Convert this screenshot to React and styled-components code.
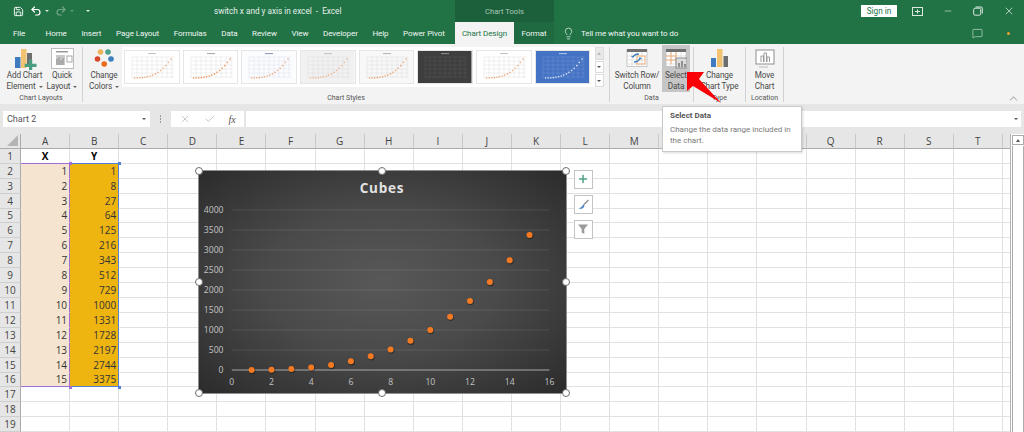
import React from "react";
import styled, { createGlobalStyle } from "styled-components";
import { Save, Undo2, Redo2, Lightbulb, MessageSquare, X, Check, ChevronUp, Plus, Minus } from "lucide-react";

const UI = `"Open Sans", "Noto Sans", "Liberation Sans", sans-serif`;
const SMALL = `Roboto, "Open Sans", "Liberation Sans", sans-serif`;

const Global = createGlobalStyle`
  html, body { margin: 0; padding: 0; width: 1024px; height: 432px; overflow: hidden; background: #fff; }
  * { box-sizing: border-box; }
  body { font-family: ${UI}; }
`;

const Window = styled.div`
  position: relative; width: 1024px; height: 432px; display: flex; flex-direction: column; overflow: hidden;
`;

/* ---------- title bar ---------- */
const TitleBar = styled.div`
  height: 22px; flex: none; background: #217346; color: #fff; display: flex; align-items: center; font: 8.2px ${SMALL};
`;
const Qat = styled.div`
  width: 214px; height: 100%; padding-left: 13px; display: flex; align-items: center; flex: none;
`;
const QatButton = styled.span`
  display: inline-flex; align-items: center; width: ${p => p.$w}px; opacity: ${p => (p.$dim ? 0.35 : 1)};
`;
const SmallCaret = styled.i`
  display: inline-block; width: 0; height: 0; margin-left: ${p => p.$gap ?? 3}px; vertical-align: middle;
  border-left: 2px solid transparent; border-right: 2px solid transparent;
  border-top: 2px solid ${p => p.$c || "#666"};
`;
const DocTitle = styled.div`
  width: 241px; flex: none; white-space: pre; color: #e6f0ea;
`;
const ContextTab = styled.div`
  width: 99px; height: 100%; flex: none; background: #1c5f3b; color: #a9c7b6; font: 7.6px ${SMALL};
  display: flex; align-items: center; justify-content: center;
`;
const Spring = styled.div` flex: 1; `;
const SignIn = styled.div`
  width: 36px; height: 12px; background: #fff; color: #217346; font: 8.2px/12px ${SMALL}; text-align: center; flex: none;
`;
const WinButtons = styled.div`
  display: flex; width: 127px; padding-left: 5px; flex: none; align-items: center;
`;
const WinButton = styled.div`
  width: 30.5px; height: 22px; display: flex; align-items: center; justify-content: center; color: #dbe9e1;
`;

/* ---------- tabs ---------- */
const TabRow = styled.div`
  height: 22px; flex: none; background: #217346; display: flex; align-items: stretch; color: #eef5f1; font: 8.05px ${SMALL}; letter-spacing: -0.1px;
`;
const TabList = styled.div`
  width: 455px; flex: none; display: flex; align-items: stretch;
`;
const Tab = styled.div`
  display: flex; align-items: center; white-space: nowrap; padding: 0 ${p => p.$pad ?? 7.3}px;
  ${p => p.$w ? `width:${p.$w}px; justify-content:center; padding:0;` : ""}
  ${p => p.$active ? "background:#f3f3f3; color:#217346;" : ""}
  ${p => p.$context ? "background:#1f6a41;" : ""}
`;
const TellMe = styled.div`
  display: flex; align-items: center; gap: 6px; margin-left: 8px; color: #eef5f1;
`;
const TabEnd = styled.div`
  margin-left: auto; display: flex; align-items: center; gap: 24px; padding-right: 14px;
`;
const Dot = styled.span`
  width: 3px; height: 3px; border-radius: 50%; background: #f0a030;
`;

/* ---------- ribbon ---------- */
const Ribbon = styled.div`
  height: 60px; flex: none; background: #f3f3f3; display: flex; position: relative; color: #444; font: 8.2px ${SMALL}; letter-spacing: -0.1px;
`;
const Group = styled.div`
  width: ${p => p.$w}px; flex: none; display: flex; flex-direction: column; height: 100%;
`;
const GroupBody = styled.div`
  height: 49px; padding: 1px 0 0 ${p => p.$pl ?? 0}px; display: flex; align-items: flex-start; flex: none;
`;
const GroupLabel = styled.div`
  text-align: center; font-size: 7px; line-height: 11px; color: #555; white-space: nowrap; letter-spacing: 0;
`;
const Divider = styled.div`
  width: 1px; flex: none; margin: 3px 0 2.5px; background: #d2d2d2;
`;
const RButton = styled.div`
  width: ${p => p.$w}px; height: 47px; flex: none; display: flex; flex-direction: column; align-items: center;
  padding-top: 2px; background: ${p => (p.$hot ? "#c6c6c6" : "transparent")};
`;
const RIcon = styled.svg`
  display: block; width: ${p => p.width}px; height: 23px; flex: none;
`;
const RText = styled.div`
  text-align: center; line-height: 11px; white-space: nowrap; color: #4a4a4a;
`;
const Gallery = styled.div`
  width: 480px; height: 40px; margin-top: 2px; background: #fff; display: flex; align-items: center; padding-left: 3px; gap: 5.2px; flex: none;
`;
const Thumb = styled.svg`
  width: 53.5px; height: 32px; flex: none; display: block; outline: 1px solid #e6e6e6;
`;
const GalleryScroll = styled.div`
  margin-left: auto; width: 9px; height: 40px; display: flex; flex-direction: column; gap: 1px; flex: none;
`;
const GalleryBtn = styled.div`
  flex: 1; background: ${p => (p.$off ? "#e9e9e9" : "#fff")}; border: 1px solid #dcdcdc; display: flex; align-items: center; justify-content: center; flex-direction: column; gap: 1px;
`;
const Collapse = styled.div`
  position: absolute; right: 4px; bottom: -1px; color: #666; display: flex;
`;

/* ---------- formula bar ---------- */
const FormulaRow = styled.div`
  height: 30px; flex: none; background: #e6e6e6; display: flex; align-items: center; padding: 0 3px; color: #555; font: 9px ${SMALL};
`;
const NameBox = styled.div`
  width: 147px; height: 16px; background: #fff; display: flex; align-items: center; justify-content: space-between; padding: 0 4px; flex: none;
`;
const Grip = styled.div`
  width: 21px; flex: none; display: flex; flex-direction: column; align-items: center; gap: 1.5px;
  span { width: 1.5px; height: 1.5px; background: #999; }
`;
const FxBox = styled.div`
  width: 73px; height: 16px; background: #fff; display: flex; align-items: center; justify-content: space-around; padding: 0 2px; flex: none; color: #b5b5b5;
`;
const Fx = styled.span`
  font: italic 10px "Liberation Serif", serif; color: #555;
`;
const FormulaInput = styled.div`
  flex: 1; height: 16px; margin-left: 2px; background: #fff; display: flex; align-items: center; justify-content: flex-end; padding-right: 3px;
`;

/* ---------- sheet ---------- */
const Sheet = styled.div`
  flex: 1; position: relative; display: flex; overflow: hidden; background: #fff; min-height: 0;
`;
const Grid = styled.div`
  width: 1011px; flex: none; display: grid; grid-template-columns: 21px repeat(21, 49.1px); grid-auto-rows: 14.92px;
  align-content: start; overflow: hidden; font-size: 10px; color: #333; border-right: 1px solid #b5b5b5;
`;
const Corner = styled.div`
  background: #e6e6e6; border-bottom: 1px solid #ababab; border-right: 1px solid #ababab; position: relative;
  &::after { content: ""; position: absolute; right: 2px; bottom: 2px; border-style: solid; border-width: 0 0 11px 11px; border-color: transparent transparent #b4b4b4 transparent; }
`;
const ColHead = styled.div`
  background: #e6e6e6; border-bottom: 1px solid #ababab; border-right: 1px solid #c8c8c8;
  display: flex; align-items: center; justify-content: center; color: #444; font-size: 10px;
`;
const RowHead = styled.div`
  background: #e6e6e6; border-right: 1px solid #ababab; border-bottom: 1px solid #cfcfcf;
  display: flex; align-items: center; justify-content: center; color: #444; font-size: 10px;
`;
const Cell = styled.div`
  background: ${p => p.$fill || "#fff"};
  border-right: 1px solid ${p => p.$edgeR || "#e1e1e1"};
  border-bottom: 1px solid ${p => p.$edgeB || "#e1e1e1"};
  display: flex; align-items: center; justify-content: ${p => (p.$head ? "center" : "flex-end")};
  padding-right: ${p => (p.$head ? 0 : 2)}px; font-weight: ${p => (p.$head ? 700 : 400)};
  color: ${p => (p.$head ? "#000" : "#333")}; line-height: 1;
`;
const RangeDot = styled.span`
  position: absolute; width: 3px; height: 3px; background: ${p => p.$c}; left: ${p => p.$x}px; top: ${p => p.$y}px;
`;
const Scrollbar = styled.div`
  width: 12px; flex: none; margin-left: 1px; display: flex; flex-direction: column; background: #fff; padding-top: 1px;
`;
const ScrollUp = styled.div`
  height: 10px; flex: none; border: 1px solid #ababab; display: flex; align-items: center; justify-content: center;
`;
const ScrollThumb = styled.div`
  flex: 1; border-left: 1px solid #ababab; border-right: 1px solid #ababab; margin-top: 1px; background: #fff;
`;
const UpTri = styled.i`
  width: 0; height: 0; border-left: 2.5px solid transparent; border-right: 2.5px solid transparent; border-bottom: 3px solid ${p => p.$c || "#555"};
`;

/* ---------- chart overlay ---------- */
const ChartFrame = styled.div`
  position: absolute; left: 197.5px; top: 36px; width: 369px; height: 224px;
  background: radial-gradient(ellipse at 50% 50%, #585858 0%, #4a4a4a 45%, #2b2b2b 100%);
  border: 1px solid #8f8f8f;
`;
const ChartSvg = styled.svg` display: block; position: absolute; left: -1px; top: -1px; `;
const Handle = styled.span`
  position: absolute; left: ${p => p.$x}%; top: ${p => p.$y}%; width: 8px; height: 8px; border-radius: 50%;
  background: #fff; border: 1.5px solid #6e6e6e; transform: translate(-50%, -50%);
`;
const ChartTools = styled.div`
  position: absolute; left: 574px; top: 36px; display: flex; flex-direction: column; gap: 6.5px;
`;
const ChartTool = styled.div`
  width: 18.5px; height: 18.5px; background: #fff; border: 1px solid #c4c4c4; display: flex; align-items: center; justify-content: center;
`;

/* ---------- tooltip + arrow ---------- */
const Tooltip = styled.div`
  position: absolute; left: 662px; top: 106px; width: 140px; height: 46px; background: #fff; border: 1px solid #c9c9c9;
  box-shadow: 1px 1px 2px rgba(0,0,0,.15); padding: 3px 7px; font: 8px/11px ${SMALL}; color: #7a7a7a; z-index: 5;
`;
const TipTitle = styled.div`
  font-weight: 700; color: #555; margin-bottom: 3px; font-size: 8px;
`;
const Arrow = styled.svg`
  position: absolute; left: 680px; top: 66px; z-index: 6;
`;

/* ---------- data ---------- */
const COLS = "ABCDEFGHIJKLMNOPQRSTU".split("");
const TABS = ["Home", "Insert", "Page Layout", "Formulas", "Data", "Review", "View", "Developer", "Help", "Power Pivot"];
const N = Array.from({ length: 15 }, (_, i) => i + 1);
const PURPLE = "#a06fd6";
const BLUE = "#4f80d8";

const THUMBS = [
  { bg: "#fff", grid: "#dedede", dot: "#f0a878", t: "#bbb" },
  { bg: "#fff", grid: "#dedede", dot: "#ef8d4e", t: "#999" },
  { bg: "#fbfcfe", grid: "#dde3ee", dot: "#f0a878", t: "#7a8aa8" },
  { bg: "#f1f1f1", grid: "#dcdcdc", dot: "#f2b48e", t: "#bbb" },
  { bg: "#f8f8f8", grid: "#dedede", dot: "#f0a070", t: "#aaa" },
  { bg: "#3e3e3e", grid: "#575757", dot: "#4b4b4b", t: "#999" },
  { bg: "#fff", grid: "#dedede", dot: "#f0a878", t: "#bbb" },
  { bg: "#4472c4", grid: "#6f93d3", dot: "#e6ecf6", t: "#c8d6ee" },
];

function ChartThumb({ bg, grid, dot, t }) {
  const xs = [7, 12, 17, 22, 27, 32, 37, 42, 47];
  const ys = [6, 10, 14, 18, 22, 26];
  return (
    <Thumb viewBox="0 0 53.5 32">
      <rect width="53.5" height="32" fill={bg} />
      <rect x="23" y="2.2" width="8" height=".9" fill={t} />
      {xs.map(x => <line key={x} x1={x} x2={x} y1="6" y2="27" stroke={grid} strokeWidth=".5" />)}
      {ys.map(y => <line key={y} x1="7" x2="49" y1={y} y2={y} stroke={grid} strokeWidth=".5" />)}
      {N.map(n => (
        <circle key={n} cx={7 + n * 2.6} cy={27 - (n * n * n) / 3375 * 19} r=".8" fill={dot} />
      ))}
    </Thumb>
  );
}

function Chart() {
  const ox = 33.8, sx = 19.85, oy = 200, sy = 0.04;
  return (
    <ChartSvg width="369" height="224" viewBox="0 0 369 224">
      <text x="184" y="23" textAnchor="middle" fill="#e2e2e2" fontFamily={UI} fontSize="13.5" fontWeight="700" letterSpacing="0.8">Cubes</text>
      {[0, 500, 1000, 1500, 2000, 2500, 3000, 3500, 4000].map(v => (
        <g key={v}>
          {v > 0 && <line x1={ox} x2={ox + 16 * sx} y1={oy - v * sy} y2={oy - v * sy} stroke="#fff" strokeOpacity=".1" />}
          <text x="25.5" y={oy - v * sy + 3} textAnchor="end" fill="#c4c4c4" fontFamily={UI} fontSize="8.6">{v}</text>
        </g>
      ))}
      <line x1={ox} x2={ox + 16 * sx} y1={oy} y2={oy} stroke="#a8a8a8" strokeWidth="1.2" />
      {[0, 2, 4, 6, 8, 10, 12, 14, 16].map(v => (
        <text key={v} x={ox + v * sx} y="215" textAnchor="middle" fill="#c4c4c4" fontFamily={UI} fontSize="8.6">{v}</text>
      ))}
      {N.map(n => (
        <g key={n}>
          <circle cx={ox + n * sx + 0.6} cy={oy - n * n * n * sy + 0.8} r="3.4" fill="#000" fillOpacity=".35" />
          <circle cx={ox + n * sx} cy={oy - n * n * n * sy} r="3" fill="#f37a22" />
        </g>
      ))}
    </ChartSvg>
  );
}

const AddChartIcon = () => (
  <RIcon width="28" viewBox="0 0 28 23">
    <rect x="4" y="10" width="5.5" height="11" fill="#3f7cbf" />
    <rect x="10" y="2" width="5.5" height="19" fill="#f0c272" />
    <rect x="16" y="6" width="5" height="12" fill="#6e6e6e" />
    <path d="M18 12.5h3.2v4.3h4.3V20h-4.3v3H18v-3h-4.3v-3.2H18z" fill="#4a9d80" />
  </RIcon>
);

const Sheet3 = () => (
  <>
    <rect x="1" y="2.5" width="20" height="17" fill="#fff" stroke="#bbb" strokeWidth=".8" />
    <rect x="1" y="2" width="20" height="3" fill="#707070" />
    {[6, 11, 16].map(x => <line key={x} x1={x} x2={x} y1="5" y2="19.5" stroke="#d5d5d5" strokeWidth=".7" />)}
    {[9, 13, 17].map(y => <line key={y} x1="1" x2="21" y1={y} y2={y} stroke="#d5d5d5" strokeWidth=".7" />)}
  </>
);

const Caret = () => <SmallCaret />;

export default function App() {
  return (
    <Window>
      <Global />
      <TitleBar>
        <Qat>
          <QatButton $w={17}><Save size={11} strokeWidth={2} /></QatButton>
          <QatButton $w={25}><Undo2 size={12} strokeWidth={2.4} /><SmallCaret $c="#d5e6dc" $gap={3} /></QatButton>
          <QatButton $w={28} $dim><Redo2 size={12} strokeWidth={2.4} /><SmallCaret $c="#d5e6dc" $gap={3} /></QatButton>
          <QatButton $w={8}><SmallCaret $c="#e6f0ea" $gap={3} /></QatButton>
        </Qat>
        <DocTitle>{"switch x and y axis in excel  -  Excel"}</DocTitle>
        <ContextTab>Chart Tools</ContextTab>
        <Spring />
        <SignIn>Sign in</SignIn>
        <WinButtons>
          <WinButton>
            <svg width="11" height="9" viewBox="0 0 11 9"><rect x=".5" y=".5" width="10" height="8" fill="none" stroke="#dbe9e1" /><path d="M3 4.5h5M5.5 2.5v4" stroke="#dbe9e1" /></svg>
          </WinButton>
          <WinButton><Minus size={10} strokeWidth={1.5} /></WinButton>
          <WinButton>
            <svg width="10" height="10" viewBox="0 0 10 10"><rect x=".7" y="2.2" width="7" height="7" rx="1.4" fill="none" stroke="#dbe9e1" /><path d="M2.5 1h5.8a1 1 0 0 1 1 1v5.5" fill="none" stroke="#dbe9e1" /></svg>
          </WinButton>
          <WinButton><X size={12} strokeWidth={1.5} /></WinButton>
        </WinButtons>
      </TitleBar>

      <TabRow>
        <TabList>
          <Tab $pad={13}>File</Tab>
          {TABS.map(t => <Tab key={t}>{t}</Tab>)}
        </TabList>
        <Tab $active $w={59}>Chart Design</Tab>
        <Tab $context $w={40}>Format</Tab>
        <TellMe><Lightbulb size={13} strokeWidth={1.3} />Tell me what you want to do</TellMe>
        <TabEnd><MessageSquare size={11} strokeWidth={1.2} color="#eef5f1" /><Dot /></TabEnd>
      </TabRow>

      <Ribbon>
        <Group $w={82}>
          <GroupBody $pl={3}>
            <RButton $w={43}>
              <AddChartIcon />
              <RText>Add Chart<br />Element<Caret /></RText>
            </RButton>
            <RButton $w={32}>
              <RIcon width="23" viewBox="0 0 23 23">
                <rect x=".5" y="1.5" width="22" height="20" fill="#fff" stroke="#bdbdbd" />
                <rect x="5" y="4" width="12" height="1.5" fill="#999" />
                <rect x="5" y="8" width="9" height="10" fill="#c9c9c9" />
                <path d="M6 18v-6M8 18v-8M10 18v-5M12 18v-7" stroke="#8d8d8d" />
                <rect x="16" y="9" width="5" height="6" fill="#fff" stroke="#aaa" />
              </RIcon>
              <RText>Quick<br />Layout<Caret /></RText>
            </RButton>
          </GroupBody>
          <GroupLabel>Chart Layouts</GroupLabel>
        </Group>
        <Divider />
        <Group $w={526}>
          <GroupBody $pl={3}>
            <RButton $w={36}>
              <RIcon width="20" viewBox="0 0 20 23">
                <circle cx="6.5" cy="5" r="2.8" fill="#eeb25a" />
                <circle cx="14" cy="5" r="2.8" fill="#4ea08a" />
                <circle cx="3.5" cy="12" r="2.8" fill="#d9472b" />
                <circle cx="17" cy="12" r="2.8" fill="#3f7fbf" />
                <circle cx="10.2" cy="17" r="2.8" fill="#ea6a1e" />
              </RIcon>
              <RText>Change<br />Colors<Caret /></RText>
            </RButton>
            <Gallery>
              {THUMBS.map((t, i) => <ChartThumb key={i} {...t} />)}
              <GalleryScroll>
                <GalleryBtn $off><UpTri $c="#bbb" /></GalleryBtn>
                <GalleryBtn><SmallCaret $c="#555" $gap={0} /></GalleryBtn>
                <GalleryBtn><SmallCaret $c="#555" $gap={0} /></GalleryBtn>
              </GalleryScroll>
            </Gallery>
          </GroupBody>
          <GroupLabel>Chart Styles</GroupLabel>
        </Group>
        <Divider />
        <Group $w={83}>
          <GroupBody $pl={2}>
            <RButton $w={50}>
              <RIcon width="22" viewBox="0 0 22 23">
                <Sheet3 />
                <rect x="11" y="9" width="8" height="8" fill="none" stroke="#f0b27a" />
                <path d="M13 7c-3 0-5 1-6 3l-1.5-1M8 15c3 0 5-1 6-4l1.5 1" fill="none" stroke="#3f7fbf" strokeWidth="1.3" />
              </RIcon>
              <RText>Switch Row/<br />Column</RText>
            </RButton>
            <RButton $w={28} $hot>
              <RIcon width="22" viewBox="0 0 22 23">
                <Sheet3 />
                <path d="M1 9h10M1 13h10M6 5v12M11 5v12" stroke="#f0b27a" fill="none" />
                <rect x="11" y="11" width="11" height="10" fill="#dcdcdc" stroke="#8b8b8b" />
                <path d="M14 20v-4M17 20v-6M20 20v-3" stroke="#777" strokeWidth="1.5" />
              </RIcon>
              <RText>Select<br />Data</RText>
            </RButton>
          </GroupBody>
          <GroupLabel>Data</GroupLabel>
        </Group>
        <Divider />
        <Group $w={51}>
          <GroupBody>
            <RButton $w={51}>
              <RIcon width="20" viewBox="0 0 20 23">
                <rect x="1" y="11" width="5" height="9" fill="#3f7cbf" />
                <rect x="7" y="2" width="5.5" height="18" fill="#f0c272" />
                <rect x="13.5" y="9" width="4.5" height="11" fill="#6e6e6e" />
              </RIcon>
              <RText>Change<br />Chart Type</RText>
            </RButton>
          </GroupBody>
          <GroupLabel>Type</GroupLabel>
        </Group>
        <Divider />
        <Group $w={37}>
          <GroupBody>
            <RButton $w={37}>
              <RIcon width="20" viewBox="0 0 20 23">
                <rect x="1" y="3" width="18" height="14" fill="#fff" stroke="#8f8f8f" />
                <path d="M6 15V9h2.5v6M9 15V6h2.5v9M12 15v-5h2.5v5" fill="none" stroke="#999" />
                <path d="M4 20h9" stroke="#bbb" />
              </RIcon>
              <RText>Move<br />Chart</RText>
            </RButton>
          </GroupBody>
          <GroupLabel>Location</GroupLabel>
        </Group>
        <Divider />
        <Collapse><ChevronUp size={13} strokeWidth={1.2} /></Collapse>
      </Ribbon>

      <FormulaRow>
        <NameBox>Chart 2<SmallCaret $c="#555" /></NameBox>
        <Grip><span /><span /><span /></Grip>
        <FxBox>
          <X size={12} strokeWidth={1.4} />
          <Check size={12} strokeWidth={1.4} />
          <Fx>fx</Fx>
        </FxBox>
        <FormulaInput><SmallCaret $c="#555" /></FormulaInput>
      </FormulaRow>

      <Sheet>
        <Grid>
          <Corner />
          {COLS.map(c => <ColHead key={c}>{c === "U" ? "" : c}</ColHead>)}
          {Array.from({ length: 19 }, (_, r) => r + 1).map(row => (
            <React.Fragment key={row}>
              <RowHead>{row}</RowHead>
              {COLS.map((c, ci) => {
                const data = row >= 2 && row <= 16;
                if (ci === 0) {
                  return (
                    <Cell key={c} $head={row === 1} $fill={data ? "#f5e4cf" : undefined}
                      $edgeR={data ? PURPLE : undefined}
                      $edgeB={row === 1 || row === 16 ? PURPLE : data ? "#f5e4cf" : undefined}>
                      {row === 1 ? "X" : data ? row - 1 : ""}
                    </Cell>
                  );
                }
                if (ci === 1) {
                  return (
                    <Cell key={c} $head={row === 1} $fill={data ? "#eeb511" : undefined}
                      $edgeR={data ? BLUE : undefined}
                      $edgeB={row === 1 || row === 16 ? BLUE : data ? "#eeb511" : undefined}>
                      {row === 1 ? "Y" : data ? (row - 1) ** 3 : ""}
                    </Cell>
                  );
                }
                return <Cell key={c} />;
              })}
            </React.Fragment>
          ))}
        </Grid>
        <Scrollbar>
          <ScrollUp><UpTri /></ScrollUp>
          <ScrollThumb />
        </Scrollbar>

        <RangeDot $c={PURPLE} $x={69} $y={28} />
        <RangeDot $c={BLUE} $x={118} $y={28} />
        <RangeDot $c={PURPLE} $x={69} $y={252} />
        <RangeDot $c={BLUE} $x={118} $y={252} />

        <ChartFrame>
          <Chart />
          {[[0, 0], [50, 0], [100, 0], [0, 50], [100, 50], [0, 100], [50, 100], [100, 100]].map(([x, y]) => (
            <Handle key={`${x}-${y}`} $x={x} $y={y} />
          ))}
        </ChartFrame>
        <ChartTools>
          <ChartTool><Plus size={12} strokeWidth={3} color="#4f9f82" /></ChartTool>
          <ChartTool>
            <svg width="13" height="13" viewBox="0 0 13 13"><path d="M11.5 2 7 6.5" stroke="#8a8a8a" strokeWidth="1.2" /><path d="M6.5 6c-1 2-2.5 3.5-5 4.5 2.5.8 5 .3 6-2.8z" fill="#4f85c4" /></svg>
          </ChartTool>
          <ChartTool>
            <svg width="12" height="12" viewBox="0 0 12 12"><path d="M1 1.5h10L7.3 6v5L4.7 9.5V6z" fill="#9a9a9a" /></svg>
          </ChartTool>
        </ChartTools>
      </Sheet>

      <Tooltip>
        <TipTitle>Select Data</TipTitle>
        Change the data range included in<br />the chart.
      </Tooltip>
      <Arrow width="44" height="42" viewBox="680 66 44 42">
        <path d="M687 72 704 72 699 79 721 103 693 86 687 91Z" fill="#fb0007" />
      </Arrow>
    </Window>
  );
}
